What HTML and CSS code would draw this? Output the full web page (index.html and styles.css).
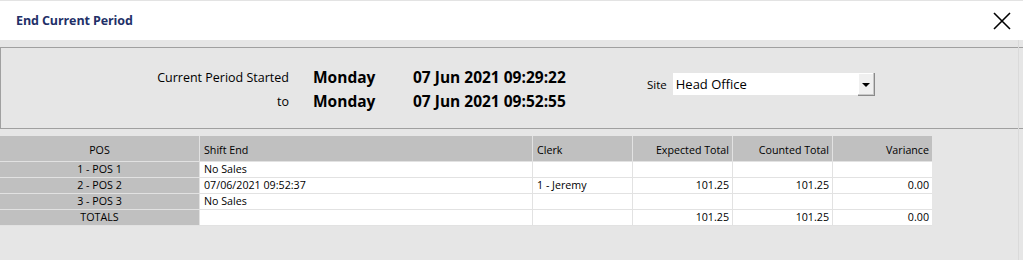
FILE: index.html
```html
<!DOCTYPE html>
<html lang="en">
<head>
<meta charset="utf-8">
<title>End Current Period</title>
<link rel="stylesheet" href="styles.css">
</head>
<body>
<div class="window">
  <header class="titlebar">
    <h1 class="title">End Current Period</h1>
    <button class="close" aria-label="Close">
      <svg width="18" height="18" viewBox="0 0 18 18"><path d="M1 1 L17 17 M17 1 L1 17" stroke="#000" stroke-width="1.6" fill="none"/></svg>
    </button>
  </header>
  <main class="content">
    <section class="period">
      <div class="period-grid">
        <div class="label">Current Period Started</div>
        <div class="day">Monday</div>
        <div class="date">07 Jun 2021 09:29:22</div>
        <div class="label">to</div>
        <div class="day">Monday</div>
        <div class="date">07 Jun 2021 09:52:55</div>
      </div>
      <div class="site">
        <span class="site-label">Site</span>
        <div class="select">
          <span class="select-value">Head Office</span>
          <span class="select-btn"><span class="arrow"></span></span>
        </div>
      </div>
    </section>
    <section class="grid">
      <div class="hd center">POS</div>
      <div class="hd">Shift End</div>
      <div class="hd">Clerk</div>
      <div class="hd num">Expected Total</div>
      <div class="hd num">Counted Total</div>
      <div class="hd num">Variance</div>

      <div class="pos">1 - POS 1</div>
      <div class="cell">No Sales</div>
      <div class="cell"></div>
      <div class="cell num"></div>
      <div class="cell num"></div>
      <div class="cell num"></div>

      <div class="pos">2 - POS 2</div>
      <div class="cell">07/06/2021 09:52:37</div>
      <div class="cell">1 - Jeremy</div>
      <div class="cell num">101.25</div>
      <div class="cell num">101.25</div>
      <div class="cell num">0.00</div>

      <div class="pos">3 - POS 3</div>
      <div class="cell">No Sales</div>
      <div class="cell"></div>
      <div class="cell num"></div>
      <div class="cell num"></div>
      <div class="cell num"></div>

      <div class="pos">TOTALS</div>
      <div class="cell"></div>
      <div class="cell"></div>
      <div class="cell num">101.25</div>
      <div class="cell num">101.25</div>
      <div class="cell num">0.00</div>
    </section>
    <div class="edge"></div>
  </main>
</div>
</body>
</html>
```

FILE: styles.css
```css
* { box-sizing: border-box; }
html, body { margin: 0; padding: 0; }
body {
  font-family: "Open Sans", "Noto Sans", sans-serif;
  color: #000;
  background: #e6e6e6;
}
.window {
  width: 1023px;
  height: 260px;
  background: #e6e6e6;
  overflow: hidden;
}
.titlebar {
  height: 40px;
  background: #fff;
  border-top: 1px solid #e3e3e3;
  display: flex;
  align-items: center;
  justify-content: space-between;
  padding: 0 12px 0 16px;
}
.title {
  margin: 0;
  font-size: 12.5px;
  font-weight: 700;
  color: #223068;
  letter-spacing: -0.1px;
}
.close {
  border: 0;
  background: none;
  padding: 0;
  width: 18px;
  height: 18px;
  display: flex;
  margin-top: 1px;
}
.content {
  position: relative;
  padding-top: 7px;
  height: 220px;
}
.edge {
  position: absolute;
  top: 0;
  bottom: 0;
  left: 1018px;
  width: 1px;
  background: #dadada;
}
.period {
  height: 82px;
  border: 1px solid #a0a0a0;
  border-right: 0;
  display: flex;
  align-items: flex-start;
  padding-top: 17px;
}
.period-grid {
  display: grid;
  grid-template-columns: 288px 76px 234px;
  column-gap: 24px;
  grid-auto-rows: 24px;
  align-items: center;
}
.label {
  text-align: right;
  font-size: 12.5px;
}
.day, .date {
  font-size: 15.5px;
  font-weight: 700;
  white-space: nowrap;
}
.site {
  display: flex;
  align-items: center;
  margin-top: 8px;
}
.site-label {
  font-size: 11.5px;
  margin-right: 6px;
}
.select {
  display: flex;
  height: 23px;
}
.select-value {
  width: 185px;
  height: 22px;
  background: #fff;
  font-size: 13px;
  line-height: 22px;
  padding-left: 3px;
}
.select-btn {
  width: 17px;
  height: 23px;
  background: #f0f0f0;
  border-right: 1px solid #8a8a8a;
  border-bottom: 1px solid #8a8a8a;
  box-shadow: inset -1px -1px 0 #c8c8c8, inset 1px 1px 0 #fff;
  display: flex;
  align-items: center;
  justify-content: center;
}
.arrow {
  width: 0;
  height: 0;
  border-left: 4px solid transparent;
  border-right: 4px solid transparent;
  border-top: 4px solid #000;
  margin-top: 1px;
}
.grid {
  margin-top: 7px;
  display: grid;
  grid-template-columns: 199px 332px 99px 99px 99px 99px;
  grid-template-rows: 25px repeat(4, 15px);
  gap: 1px;
  width: 932px;
  background: #e2e2e2;
  border-bottom: 1px solid #e2e2e2;
  font-size: 10.7px;
}
.hd {
  background: #c0c0c0;
  display: flex;
  align-items: center;
  padding: 2px 4px 0;
}
.pos {
  background: #c0c0c0;
  text-align: center;
  line-height: 15px;
}
.cell {
  background: #fff;
  line-height: 15px;
  padding: 0 4px;
  white-space: nowrap;
}
.center { justify-content: center; }
.hd.num { justify-content: flex-end; padding-right: 3px; }
.cell.num { text-align: right; padding-right: 3px; }
```
